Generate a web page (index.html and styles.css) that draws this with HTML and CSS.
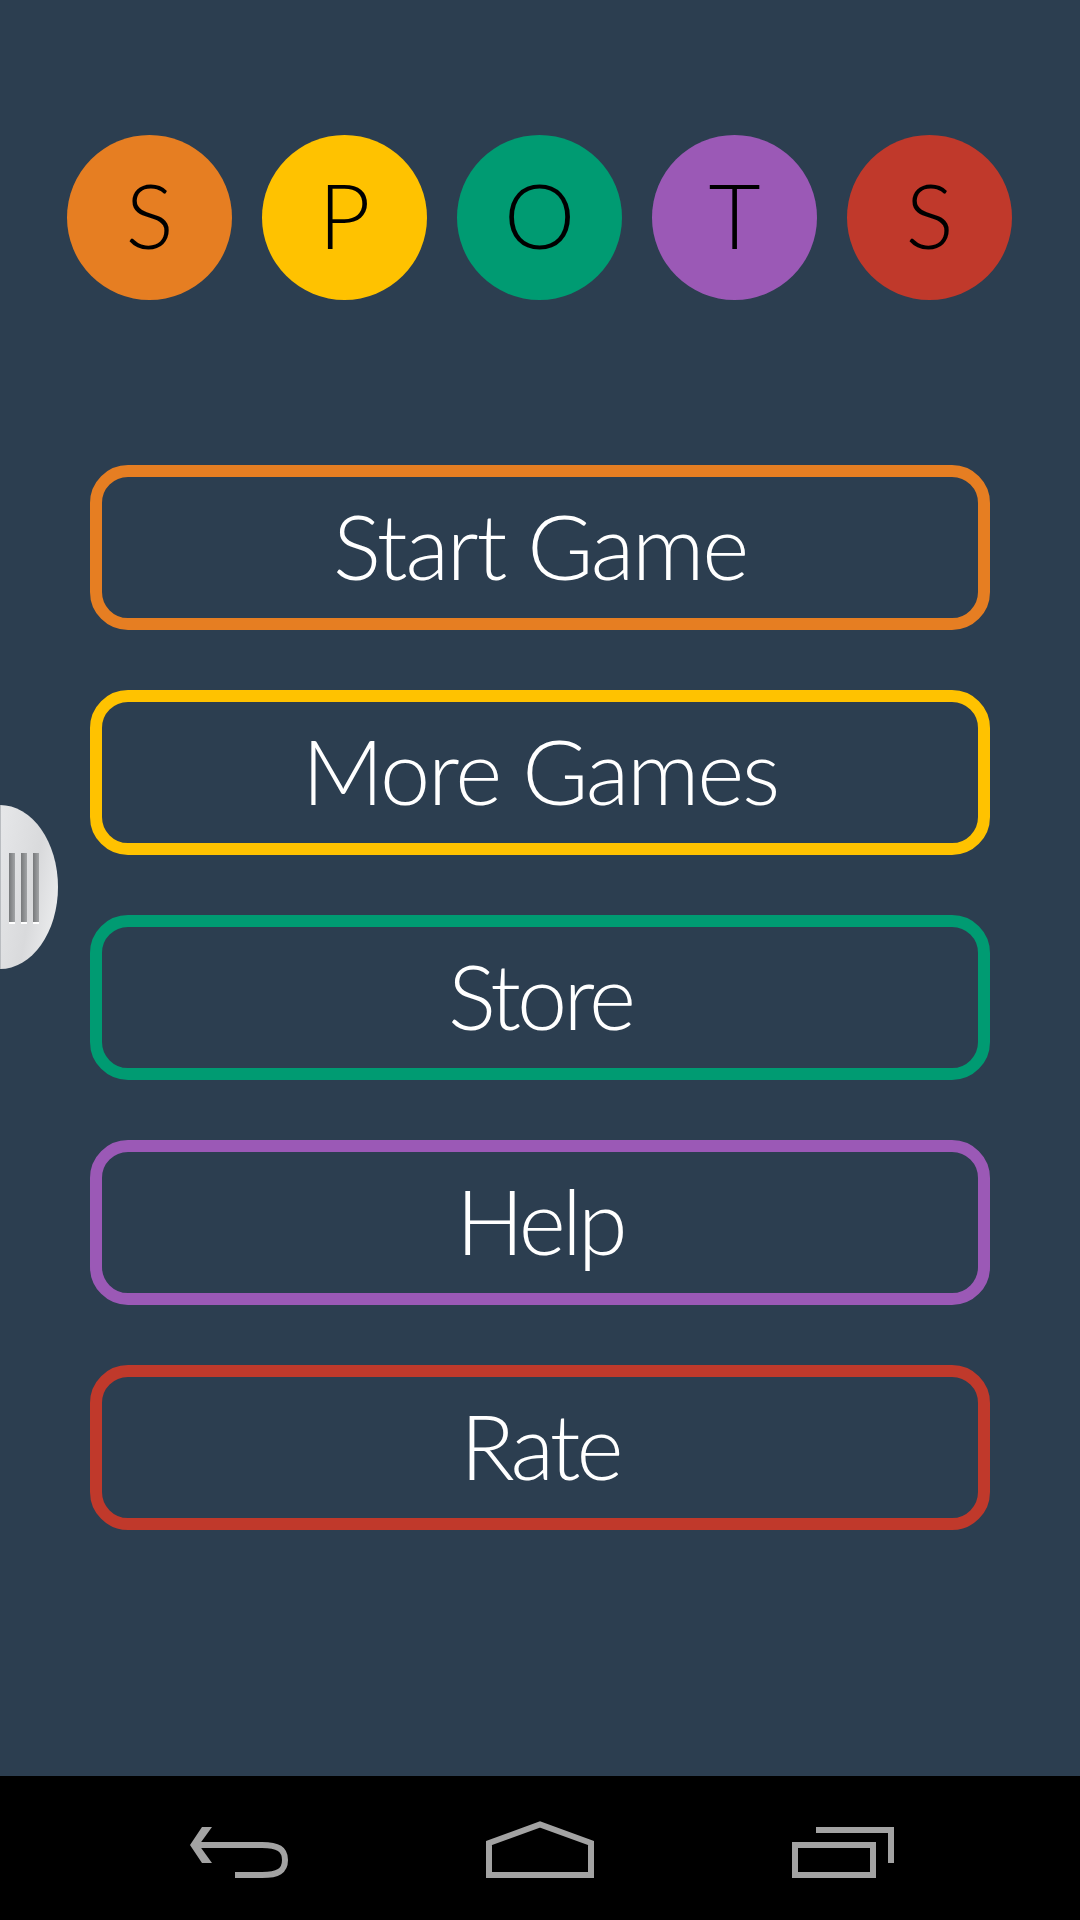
FILE: index.html

```html
<!DOCTYPE html>
<html lang="en">
<head>
<meta charset="UTF-8">
<meta name="viewport" content="width=device-width, initial-scale=1.0">
<title>Spots</title>
<link rel="stylesheet" href="styles.css">
</head>
<body>
<div class="screen">
<div class="logo">
<div class="spot orange">S</div>
<div class="spot yellow">P</div>
<div class="spot green">O</div>
<div class="spot purple">T</div>
<div class="spot red">S</div>
</div>
<div class="menu">
<div class="btn btn-orange">Start Game</div>
<div class="btn btn-yellow">More Games</div>
<div class="btn btn-green btn-short">Store</div>
<div class="btn btn-purple btn-short">Help</div>
<div class="btn btn-red btn-short">Rate</div>
</div>
<div class="handle">
<span></span>
<span></span>
<span></span>
</div>
<div class="navbar">
<svg class="nav-icon" width="98" height="51" viewBox="0 0 98 51">
<polygon class="solid" points="12,0 22,0 9,18 22,36 12,36 0,18"/>
<path d="M6 18 H72 C88 18 95 22 95 33 C95 44 88 48 72 48 H45"/>
</svg>
<svg class="nav-icon" width="108" height="57" viewBox="0 0 108 57">
<path d="M3 54 V22 L54 3.5 L105 22 V54 Z"/>
</svg>
<svg class="nav-icon" width="102" height="51" viewBox="0 0 102 51">
<rect x="3" y="18" width="78" height="30"/>
<path d="M24 3 H99 V36"/>
</svg>
</div>
</div>
</body>
</html>
```

FILE: styles.css

```css
body {
    margin: 0;
    background-color: #2c3e50;
    font-family: 'Lato', 'Liberation Sans', sans-serif;
    font-weight: 300;
}
.screen {
    position: relative;
    display: flex;
    flex-direction: column;
    height: 1920px;
    overflow: hidden;
}
.logo {
    display: flex;
    justify-content: center;
    gap: 30px;
    margin-top: 135px;
    padding-right: 1px;
}
.spot {
    display: flex;
    align-items: center;
    justify-content: center;
    box-sizing: border-box;
    width: 165px;
    height: 165px;
    padding-bottom: 7px;
    border-radius: 50%;
    color: #000;
    font-size: 90px;
}
.orange { background-color: #e67e22; }
.yellow { background-color: #ffc200; }
.green { background-color: #009b72; }
.purple { background-color: #9b59b6; }
.red { background-color: #c0392b; }
.menu {
    display: flex;
    flex-direction: column;
    align-items: center;
    gap: 60px;
    margin-top: 165px;
}
.btn {
    display: flex;
    align-items: center;
    justify-content: center;
    box-sizing: border-box;
    width: 900px;
    height: 165px;
    padding-bottom: 6px;
    border: 12px solid;
    border-radius: 38px;
    color: #fff;
    font-size: 90px;
    letter-spacing: -2.2px;
}
.btn-short { letter-spacing: -3.8px; }
.btn-orange { border-color: #e67e22; }
.btn-yellow { border-color: #ffc200; }
.btn-green { border-color: #009b72; }
.btn-purple { border-color: #9b59b6; }
.btn-red { border-color: #c0392b; }
.handle {
    position: absolute;
    left: 0;
    top: 805px;
    display: flex;
    align-items: center;
    gap: 6px;
    box-sizing: border-box;
    width: 58px;
    height: 164px;
    padding-left: 8px;
    border-left: 1px solid #b9bcc0;
    border-radius: 0 58px 58px 0 / 0 82px 82px 0;
    background: linear-gradient(100deg, #e6e7e9, #d9dadc 55%, #f1f2f3);
}
.handle span {
    width: 6px;
    height: 69px;
    background: linear-gradient(90deg, #77797b, #a2a4a6);
    box-shadow: 0 2px 0 #fff;
}
.navbar {
    display: flex;
    justify-content: space-between;
    align-items: flex-end;
    box-sizing: border-box;
    height: 144px;
    margin-top: auto;
    padding: 0 186px 42px 190px;
    background-color: #000;
}
.nav-icon path, .nav-icon rect {
    fill: none;
    stroke: #a3a3a3;
    stroke-width: 6;
}
.nav-icon .solid {
    fill: #a3a3a3;
}
```
